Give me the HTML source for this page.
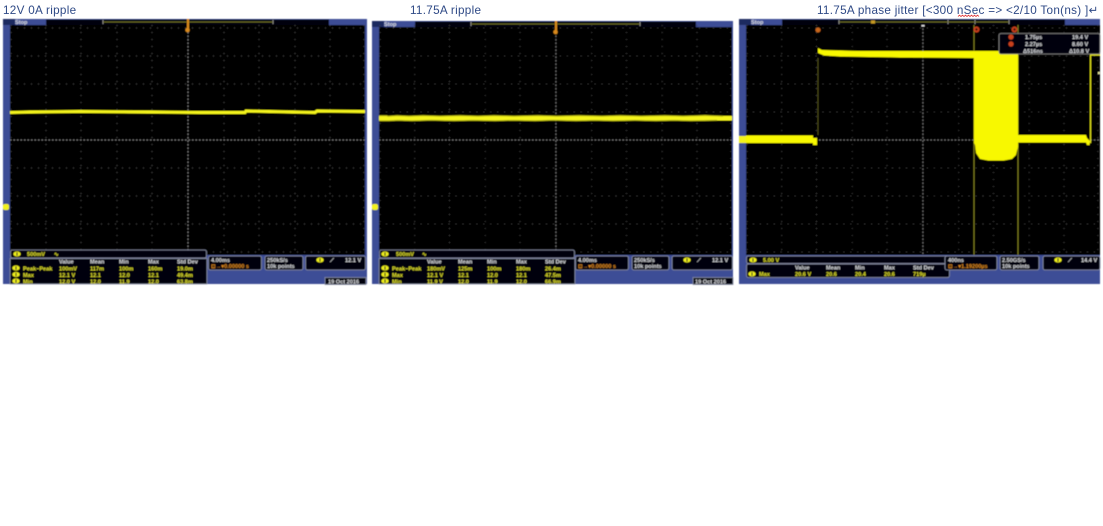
<!DOCTYPE html>
<html lang="en">
<head>
<meta charset="utf-8">
<title>Ripple</title>
<style>
html,body{margin:0;padding:0;background:#fff;width:1103px;height:526px;overflow:hidden}
svg{display:block;position:absolute;left:0;top:0}
text{font-family:"Liberation Sans",sans-serif}
.t{font-size:11.7px;fill:#2f4a86;letter-spacing:.3px}
.s{font-size:5.6px;font-weight:bold;fill:#d9dbe0}
.y{font-size:5.6px;font-weight:bold;fill:#e4e42c}
.o{font-size:5.6px;font-weight:bold;fill:#e08a1c}
.box{fill:#05060c;stroke:#8a90a8;stroke-width:.8}
</style>
</head>
<body>
<svg width="1103" height="526" viewBox="0 0 1103 526" xmlns="http://www.w3.org/2000/svg">
<defs>
<filter id="b" x="-5%" y="-5%" width="110%" height="110%"><feGaussianBlur stdDeviation="0.4"/></filter>
<g id="grid" fill="none">
  <g stroke="#3c3c3c" stroke-width="1" stroke-dasharray="1 6">
    <path d="M10 28H365M10 56H365M10 84H365M10 112H365M10 168H365M10 196H365M10 224H365M10 252H365"/>
    <path d="M11 25V255M46 25V255M81 25V255M117 25V255M152 25V255M224 25V255M259 25V255M295 25V255M330 25V255M364 25V255"/>
  </g>
  <path d="M10 140H365" stroke="#777" stroke-dasharray="1.5 2"/>
  <path d="M188 25V255" stroke="#777" stroke-dasharray="1.5 2"/>
</g>
<g id="i1"><ellipse cx="0" cy="0" rx="3.6" ry="2.5" fill="#f2f21e"/><rect x="-.6" y="-1.7" width="1.2" height="3.4" fill="#222"/></g>
</defs>

<text class="t" x="3" y="14">12V 0A ripple</text>
<text class="t" x="410" y="14">11.75A ripple</text>
<text class="t" x="817" y="14">11.75A phase jitter [&lt;300 nSec =&gt; &lt;2/10 Ton(ns) ]↵</text>
<path d="M958 16.5l1.5-1.3 1.5 1.3 1.5-1.3 1.5 1.3 1.5-1.3 1.5 1.3 1.5-1.3 1.5 1.3 1.5-1.3 1.5 1.3 1.5-1.3 1.5 1.3 1.5-1.3 1.5 1.3" fill="none" stroke="#d22" stroke-width=".8"/>

<!-- SCOPE 1 -->
<g filter="url(#b)">
<rect x="3" y="19" width="364" height="265" fill="#3d4e96"/>
<rect x="10" y="25" width="355" height="230" fill="#000"/>
<rect x="46" y="19.500" width="283" height="5.500" fill="#05060c"/>
<path d="M103 20V24M273 20V24" stroke="#aaa" stroke-width=".8"/>
<path d="M103 22H273" stroke="#6a6a20"/>
<rect x="3" y="19" width="12" height="6" fill="#1d2a60"/>
<text class="s" x="15" y="24.200">Stop</text>
<use href="#grid"/>
<path d="M10 112.500L30 112 80 111.500 150 112 200 112.500 245 112.500 246 111 315 112.500 317 111 365 111.500" fill="none" stroke="#f4f41a" stroke-width="3"/>
<path d="M188 19V32" stroke="#d98a1e" stroke-width="2"/>
<circle cx="187.500" cy="30" r="2.200" fill="#d98a1e"/>
<rect x="3" y="204" width="6" height="6" rx="2" fill="#f2f21e"/>

<rect class="box" x="10.500" y="250" width="196" height="8" rx="2"/>
<use href="#i1" x="17" y="254"/>
<text class="y" x="27" y="256">500mV</text><text class="y" x="54" y="256">∿</text>
<rect x="10" y="258.500" width="197" height="25.500" fill="#05060c" stroke="#8a90a8" stroke-width=".8"/>
<text class="s" x="59" y="263.500">Value</text><text class="s" x="90" y="263.500">Mean</text><text class="s" x="119" y="263.500">Min</text><text class="s" x="148" y="263.500">Max</text><text class="s" x="177" y="263.500">Std Dev</text>
<use href="#i1" x="16" y="268"/><text class="y" x="23" y="270.500">Peak−Peak</text><text class="y" x="59" y="270.500">100mV</text><text class="y" x="90" y="270.500">117m</text><text class="y" x="119" y="270.500">100m</text><text class="y" x="148" y="270.500">160m</text><text class="y" x="177" y="270.500">19.0m</text>
<use href="#i1" x="16" y="274.500"/><text class="y" x="23" y="277">Max</text><text class="y" x="59" y="277">12.1 V</text><text class="y" x="90" y="277">12.1</text><text class="y" x="119" y="277">12.0</text><text class="y" x="148" y="277">12.1</text><text class="y" x="177" y="277">49.4m</text>
<use href="#i1" x="16" y="281"/><text class="y" x="23" y="283.500">Min</text><text class="y" x="59" y="283.500">12.0 V</text><text class="y" x="90" y="283.500">12.0</text><text class="y" x="119" y="283.500">11.9</text><text class="y" x="148" y="283.500">12.0</text><text class="y" x="177" y="283.500">63.8m</text>

<rect class="box" x="208.500" y="256" width="53" height="14" rx="2"/>
<text class="s" x="211" y="262">4.00ms</text><text class="o" x="211" y="268">⊡→▾0.00000 s</text>
<rect class="box" x="265" y="256" width="38" height="14" rx="2"/>
<text class="s" x="267" y="262">250kS/s</text><text class="s" x="267" y="268">10k points</text>
<rect class="box" x="305.500" y="256" width="60" height="14" rx="2"/>
<use href="#i1" x="320" y="260"/><text class="s" x="330" y="262">⟋</text><text class="s" x="345" y="262">12.1 V</text>
<rect class="box" x="325" y="277.500" width="41" height="7"/>
<text class="s" x="328" y="283.500">19 Oct  2016</text>
</g>

<!-- SCOPE 2 -->
<g filter="url(#b)">
<rect x="372" y="21" width="361" height="263" fill="#3d4e96"/>
<rect x="379" y="27" width="353" height="228" fill="#000"/>
<rect x="415" y="21.500" width="281" height="5.500" fill="#05060c"/>
<path d="M471 22V26M640 22V26" stroke="#aaa" stroke-width=".8"/>
<path d="M471 24H640" stroke="#6a6a20"/>
<rect x="372" y="21" width="12" height="6" fill="#1d2a60"/>
<text class="s" x="384" y="25.800">Stop</text>
<use href="#grid" transform="translate(369 0) scale(.994 1)"/>
<path d="M379 118.200H732" fill="none" stroke="#f4f41a" stroke-width="4.600"/>
<path d="M379 115.800h8l1 .6 9-.8 12 .6 14-.6 17 .6 20-.6 18 .6 16-.6 20 .6 24-.6 19 .6 22-.6 23 .6 18-.6 21 .6 24-.6 18 .6 22-.7 18 .7M379 120.800h10l9-.6 14 .6 19-.7 23 .7 19-.6 22 .6 19-.6 21 .6 18-.7 23 .7 19-.6 18 .6 22-.6 21 .6 18-.5 17 .5 26-.6" fill="none" stroke="#b8b816" stroke-width="1"/>
<path d="M556 21V34" stroke="#d98a1e" stroke-width="2"/>
<circle cx="555.500" cy="32" r="2.200" fill="#d98a1e"/>
<rect x="372" y="204" width="6" height="6" rx="2" fill="#f2f21e"/>

<rect class="box" x="379.500" y="250" width="195" height="8" rx="2"/>
<use href="#i1" x="385" y="254"/>
<text class="y" x="396" y="256">500mV</text><text class="y" x="422" y="256">∿</text>
<rect x="379" y="258.500" width="196" height="25.500" fill="#05060c" stroke="#8a90a8" stroke-width=".8"/>
<text class="s" x="427" y="263.500">Value</text><text class="s" x="458" y="263.500">Mean</text><text class="s" x="487" y="263.500">Min</text><text class="s" x="516" y="263.500">Max</text><text class="s" x="545" y="263.500">Std Dev</text>
<use href="#i1" x="385" y="268"/><text class="y" x="392" y="270.500">Peak−Peak</text><text class="y" x="427" y="270.500">180mV</text><text class="y" x="458" y="270.500">125m</text><text class="y" x="487" y="270.500">100m</text><text class="y" x="516" y="270.500">180m</text><text class="y" x="545" y="270.500">26.4m</text>
<use href="#i1" x="385" y="274.500"/><text class="y" x="392" y="277">Max</text><text class="y" x="427" y="277">12.1 V</text><text class="y" x="458" y="277">12.1</text><text class="y" x="487" y="277">12.0</text><text class="y" x="516" y="277">12.1</text><text class="y" x="545" y="277">47.5m</text>
<use href="#i1" x="385" y="281"/><text class="y" x="392" y="283.500">Min</text><text class="y" x="427" y="283.500">11.9 V</text><text class="y" x="458" y="283.500">12.0</text><text class="y" x="487" y="283.500">11.9</text><text class="y" x="516" y="283.500">12.0</text><text class="y" x="545" y="283.500">66.9m</text>

<rect class="box" x="575.500" y="256" width="53" height="14" rx="2"/>
<text class="s" x="578" y="262">4.00ms</text><text class="o" x="578" y="268">⊡→▾0.00000 s</text>
<rect class="box" x="632" y="256" width="37" height="14" rx="2"/>
<text class="s" x="634" y="262">250kS/s</text><text class="s" x="634" y="268">10k points</text>
<rect class="box" x="672" y="256" width="60.500" height="14" rx="2"/>
<use href="#i1" x="687" y="260"/><text class="s" x="697" y="262">⟋</text><text class="s" x="712" y="262">12.1 V</text>
<rect class="box" x="693" y="277.500" width="40" height="7"/>
<text class="s" x="695" y="283.500">19 Oct  2016</text>
</g>

<!-- SCOPE 3 -->
<g filter="url(#b)">
<rect x="739" y="19" width="361" height="265" fill="#3d4e96"/>
<rect x="746" y="25" width="354" height="230" fill="#000"/>
<rect x="782" y="19.500" width="283" height="5.500" fill="#05060c"/>
<path d="M839 20V24M1009 20V24M948 20V24M975 20V24" stroke="#aaa" stroke-width=".8"/>
<path d="M839 22H1009" stroke="#6a6a20"/>
<rect x="739" y="19" width="12" height="6" fill="#1d2a60"/>
<text class="s" x="751" y="24.200">Stop</text>
<use href="#grid" transform="translate(736 0) scale(.994 1)"/>
<path d="M974 25V255M1018 25V255" stroke="#77771e" stroke-width="1"/>
<path d="M818 58V135" stroke="#5a5a18" stroke-width=".8"/>
<path d="M746 135.500H813V138L817 138V145H813V143H746Z" fill="#f8f800"/>
<path d="M818 48L822 50 860 51 974 51V58L900 57.500 840 56.500 824 55.500 818 53Z" fill="#f8f800"/>
<path d="M974 51H1018V135H1086L1087 138 1090 141 1089.500 145 1087 145 1086 142.500H1018V147L1016 155 1012 159 1004 160.500H988L980 159 976 153 975 145 974 143Z" fill="#f8f800"/>
<path d="M1090.500 143V55H1100" fill="none" stroke="#e8e81c" stroke-width="1.200"/>
<rect x="1098" y="72" width="1.500" height="2" fill="#f0f0a0"/>
<circle cx="818" cy="30" r="2.500" fill="#c8661c"/>
<circle cx="976.500" cy="29.500" r="3" fill="#c9401c"/><circle cx="976.500" cy="29.500" r="1.200" fill="#3a1208"/>
<circle cx="1014.500" cy="29.500" r="3" fill="#c9401c"/><circle cx="1014.500" cy="29.500" r="1.200" fill="#3a1208"/>
<rect x="871" y="20.500" width="4" height="3" fill="#c89a20"/>
<rect x="921.500" y="25" width="3" height="1.500" fill="#e0e0e0"/>
<rect x="999" y="33.500" width="101" height="20.500" rx="2" fill="#05060c" stroke="#8a8a8a" stroke-width=".8"/>
<circle cx="1011" cy="37" r="2.600" fill="#c9401c"/><circle cx="1011" cy="44" r="2.600" fill="#c9401c"/>
<text class="s" x="1025" y="39">1.75µs</text><text class="s" x="1072" y="39">19.4 V</text>
<text class="s" x="1025" y="46">2.27µs</text><text class="s" x="1072" y="46">8.60 V</text>
<text class="s" x="1023" y="53">Δ516ns</text><text class="s" x="1069" y="53">Δ10.8 V</text>
<rect x="739" y="136" width="7" height="7" fill="#f2f21e"/>

<rect class="box" x="746.500" y="256" width="202" height="7.500" rx="2"/>
<use href="#i1" x="753" y="260"/>
<text class="y" x="763" y="262">5.00 V</text>
<rect class="box" x="746.500" y="264" width="203" height="13.500" rx="2"/>
<text class="s" x="795" y="269.500">Value</text><text class="s" x="826" y="269.500">Mean</text><text class="s" x="855" y="269.500">Min</text><text class="s" x="884" y="269.500">Max</text><text class="s" x="913" y="269.500">Std Dev</text>
<use href="#i1" x="752" y="274"/><text class="y" x="759" y="276">Max</text><text class="y" x="795" y="276">20.6 V</text><text class="y" x="826" y="276">20.6</text><text class="y" x="855" y="276">20.4</text><text class="y" x="884" y="276">20.6</text><text class="y" x="913" y="276">719µ</text>

<rect class="box" x="945" y="256" width="52" height="14" rx="2"/>
<text class="s" x="948" y="262">400ns</text><text class="o" x="948" y="268">⊡→▾1.19200µs</text>
<rect class="box" x="1000" y="256" width="39" height="14" rx="2"/>
<text class="s" x="1002" y="262">2.50GS/s</text><text class="s" x="1002" y="268">10k points</text>
<rect class="box" x="1043" y="256" width="57" height="14" rx="2"/>
<use href="#i1" x="1058" y="260"/><text class="s" x="1068" y="262">⟋</text><text class="s" x="1081" y="262">14.4 V</text>
</g>
</svg>
</body>
</html>
